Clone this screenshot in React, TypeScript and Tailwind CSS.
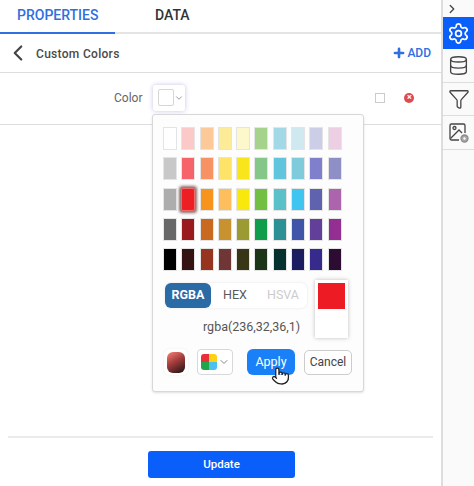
import { ChevronDown, ChevronLeft, ChevronRight, Database, Filter, Plus, Pointer, Settings } from 'lucide-react';

const swatches = [
  ['#ffffff', '#fcc9c9', '#fdc998', '#fdec97', '#fdf8cb', '#a5d38c', '#a3d8e6', '#d0e9f1', '#cccde6', '#eccfe2'],
  ['#c8c8c8', '#f6636b', '#f79264', '#fde468', '#f8e51c', '#84c788', '#63c4de', '#7fcbdc', '#7f7fcb', '#8e8fc6'],
  ['#adadad', '#ec2024', '#f7941d', '#fdbf5e', '#f8e80c', '#72bf44', '#5bc0c8', '#40c4f0', '#5f63ad', '#ac64ac'],
  ['#686868', '#991b1e', '#c9691f', '#c99230', '#9c9a33', '#0f9d4b', '#2c9095', '#4054a8', '#62409a', '#932f92'],
  ['#000000', '#341313', '#963420', '#703636', '#383616', '#1c3517', '#05312f', '#1c1c60', '#362a8c', '#2c0c32'],
];

function ColorPicker() {
  return (
    <div className="absolute left-[152px] top-[114px] w-[212px] h-[278px] bg-[#fdfdfd] border border-[#d8d8d8] rounded-[3px] shadow-sm pl-[10px] pt-[12px]">
      <div className="flex flex-col gap-[7.3px]">
        {swatches.map((row, i) => (
          <div key={i} className="flex gap-[4.3px]">
            {row.map((color, j) => (
              <div
                key={j}
                className={
                  color === '#ec2024'
                    ? 'w-[14px] h-[23px] border border-[#f06a6a] rounded-[2px] shadow-[0_0_3px_1.5px_#8a6a6a]'
                    : 'w-[14px] h-[23px] border border-[#e4e4e4]'
                }
                style={{ backgroundColor: color }}
              />
            ))}
          </div>
        ))}
      </div>

      <div className="flex mt-[9px] gap-[8px]">
        <div className="w-[144px] flex flex-col pl-[2px]">
          <div className="flex h-[25px] w-[142px] mt-[3px] rounded-[6px] bg-white shadow-[0_0_3px_#e4e4e4] text-[12.5px]">
            <div className="w-[46px] flex items-center justify-center rounded-[6px] bg-[#2a6aa5] text-white font-bold">RGBA</div>
            <div className="w-[48px] flex items-center justify-center text-[#5a5a5a]">HEX</div>
            <div className="w-[48px] flex items-center justify-center text-[#cccccc]">HSVA</div>
          </div>
          <div className="mt-[10px] ml-[38px] text-[12.5px] leading-[18px] text-[#555555] whitespace-nowrap">rgba(236,32,36,1)</div>
        </div>
        <div className="w-[33px] h-[58px] bg-white shadow-[0_0_4px_#bbbbbb] p-[3px_3px_0_3px]">
          <div className="h-[26px] bg-[#ed1c24]" />
        </div>
      </div>

      <div className="flex items-center mt-[11px] relative">
        <div className="w-[24px] h-[26px] ml-[1px] flex items-center justify-center bg-white rounded-[6px] shadow-[0_0_3px_#eeeeee]">
          <div className="w-[18px] h-[21px] rounded-[6px] bg-[linear-gradient(150deg,#f07a70_5%,#a33c3c_45%,#1c1212_100%)]" />
        </div>
        <div className="flex items-center w-[36px] h-[26px] ml-[9px] pl-[3px] bg-white border border-[#d8d8d8] rounded-[4px]">
          <div className="w-[16px] h-[16px] rounded-[3px] overflow-hidden grid grid-cols-2">
            <div className="bg-[#ec2d3a]" />
            <div className="bg-[#fcd116]" />
            <div className="bg-[#1fa64a]" />
            <div className="bg-[#4cc1ee]" />
          </div>
          <ChevronDown className="w-[12px] h-[12px] ml-[1px] text-[#888888]" />
        </div>
        <button className="w-[48px] h-[26px] ml-[14px] rounded-[6px] bg-[#1a80f8] text-white text-[12.5px]">Apply</button>
        <button className="w-[48px] h-[25px] ml-[9px] rounded-[5px] bg-white border border-[#cccccc] text-[#444444] text-[12px]">Cancel</button>
        <Pointer className="absolute left-[108px] top-[16px] w-[19px] h-[22px] text-[#222222] fill-white" strokeWidth={1.6} />
      </div>
    </div>
  );
}

function SideBar() {
  return (
    <div className="w-[33px] h-full shrink-0 flex flex-col bg-[#fafafa] border-l-2 border-[#dddddd] text-[#444444]">
      <div className="h-[17px] flex items-center pl-[2px]">
        <ChevronRight className="w-[14px] h-[14px]" strokeWidth={2.2} />
      </div>
      <div className="h-[32px] bg-[#0a5ffb] flex items-center justify-center">
        <Settings className="w-[23px] h-[23px] text-white" strokeWidth={1.8} />
      </div>
      <div className="h-[34px] border-b border-[#dddddd] flex items-center justify-center">
        <Database className="w-[21px] h-[21px]" strokeWidth={1.5} />
      </div>
      <div className="h-[33px] border-b border-[#dddddd] flex items-center justify-center">
        <Filter className="w-[22px] h-[22px]" strokeWidth={1.4} />
      </div>
      <div className="h-[34px] border-b border-[#dddddd] flex items-center justify-center">
        <svg viewBox="0 0 22 22" className="w-[22px] h-[22px]" fill="none" stroke="currentColor" strokeWidth="1.3">
          <path d="M11 18H3.500a1.500 1.500 0 0 1-1.500-1.500V3.500A1.500 1.500 0 0 1 3.500 2h12A1.500 1.500 0 0 1 17 3.500V11" />
          <path d="M2.500 16.500 11 8l3 3" />
          <circle cx="6.500" cy="6" r="1.500" />
          <circle cx="16.500" cy="16.500" r="3.500" fill="#a5a5a5" stroke="#8c8c8c" />
          <circle cx="16.500" cy="16.500" r="1.200" fill="#fafafa" stroke="none" />
        </svg>
      </div>
    </div>
  );
}

export default function App() {
  return (
    <div className="relative flex w-[474px] h-[486px] overflow-hidden bg-white font-['Roboto',sans-serif]">
      <div className="w-[441px] h-full flex flex-col">
        <div className="flex h-[34px] border-b-2 border-[#e4e4e4] text-[14px] font-medium">
          <div className="w-[115px] h-[34px] border-b-2 border-[#2f6fe0] pl-[17px] pt-[5px] text-[#2f6fe0]">PROPERTIES</div>
          <div className="pl-[40px] pt-[5px] text-[#333333]">DATA</div>
        </div>
        <div className="flex items-center h-[39px] border-b border-[#dddddd]">
          <ChevronLeft className="w-[26px] h-[26px] ml-[5px] text-[#444444]" strokeWidth={2} />
          <span className="ml-[5px] mt-[2px] text-[12px] font-medium tracking-[0.3px] text-[#4a4a4a]">Custom Colors</span>
          <Plus className="w-[14px] h-[14px] ml-auto text-[#2f6fe0]" strokeWidth={4.5} />
          <span className="ml-[1px] mr-[10px] text-[12px] font-medium text-[#2f6fe0]">ADD</span>
        </div>
        <div className="flex items-center h-[52px] border-b border-[#dddddd] pb-[2px]">
          <span className="ml-[114px] text-[12px] text-[#666666]">Color</span>
          <div className="flex items-center w-[32px] h-[26px] ml-[11px] pl-[5px] bg-white rounded-[3px] shadow-[0_0_5px_#c4c0e8]">
            <div className="w-[16px] h-[17px] bg-white border border-[#d6d6d6] rounded-[2px]" />
            <ChevronDown className="w-[10px] h-[10px] text-[#888888]" />
          </div>
          <div className="w-[10px] h-[10px] ml-[190px] border border-[#cccccc]" />
          <div className="flex items-center justify-center w-[10px] h-[10px] ml-[19px] rounded-full bg-[#dc4a52] text-white text-[9px] font-bold leading-none">×</div>
        </div>
        <div className="flex-1" />
        <div className="mx-[8px] border-t-2 border-[#eaeaea] h-[50px] flex justify-center items-start pt-[13px] pl-[2px]">
          <button className="w-[147px] h-[27px] rounded-[3px] bg-[#0a5ffb] text-white text-[11.5px] font-medium">Update</button>
        </div>
      </div>
      <SideBar />
      <ColorPicker />
    </div>
  );
}
